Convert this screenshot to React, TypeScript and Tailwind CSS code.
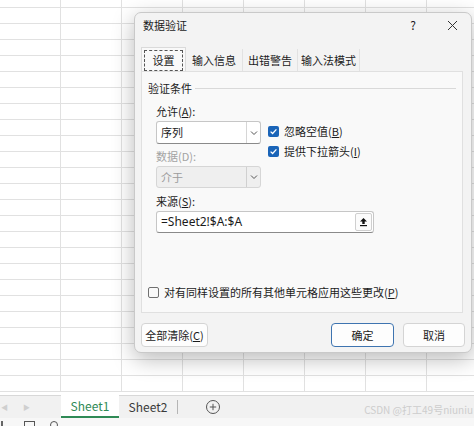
import React from "react";

const cjk = { fontFamily: '"Noto Sans CJK SC", "Noto Sans", sans-serif' };

const ROWS = 24;
const COLS = 8;

function Grid() {
  return (
    <div className="flex flex-col h-[395px] overflow-hidden">
      <div className="h-[8px] shrink-0 border-b border-[#e1e1e1] flex">
        {Array.from({ length: COLS }).map((_, c) => (
          <div key={c} className="w-[61px] shrink-0 border-r border-[#e1e1e1]" />
        ))}
      </div>
      {Array.from({ length: ROWS }).map((_, r) => (
        <div key={r} className="h-[16px] shrink-0 border-b border-[#e1e1e1] flex">
          {Array.from({ length: COLS }).map((_, c) => (
            <div key={c} className="w-[61px] shrink-0 border-r border-[#e1e1e1]" />
          ))}
        </div>
      ))}
    </div>
  );
}

function Chevron() {
  return (
    <svg width="10" height="10" viewBox="0 0 10 10" fill="none">
      <path d="M2 3.5 L5 6.5 L8 3.5" stroke="#555" strokeWidth="1" />
    </svg>
  );
}

function Select({ value, disabled }: { value: string; disabled?: boolean }) {
  return (
    <div
      className={`flex items-stretch w-[105px] border rounded-[3px] ${
        disabled ? "h-[22px] bg-[#efefef] border-[#d6d6d6] text-[#9b9b9b]" : "h-[23px] bg-white border-[#c6c6c6] border-b-[#8a8a8a] text-[#1b1b1b]"
      }`}
    >
      <div className="flex-1 flex items-center pl-[4px]">{value}</div>
      <div className={`w-[14px] flex items-center justify-center border-l ${disabled ? "border-[#d0d0d0]" : "border-[#d6d6d6]"}`}>
        <Chevron />
      </div>
    </div>
  );
}

function Check({ checked, children }: { checked?: boolean; children: React.ReactNode }) {
  return (
    <div className="flex items-center h-[20px] gap-[5px]">
      {checked ? (
        <div className="w-[11px] h-[11px] rounded-[2px] bg-[#1a64b8] flex items-center justify-center">
          <svg width="9" height="9" viewBox="0 0 9 9" fill="none">
            <path d="M1.6 4.6 L3.6 6.5 L7.4 2.4" stroke="white" strokeWidth="1.3" />
          </svg>
        </div>
      ) : (
        <div className="w-[11px] h-[11px] rounded-[2px] border border-[#707070] bg-[#f9f9f9]" />
      )}
      <span>{children}</span>
    </div>
  );
}

function Dialog() {
  return (
    <div
      className="absolute left-[134px] top-[12px] w-[338px] h-[341px] rounded-[7px] bg-[#f3f3f3] border border-[#c9c9c9] shadow-[0_6px_22px_rgba(0,0,0,0.28)] flex flex-col px-[6px] text-[11px] text-[#1b1b1b]"
      style={cjk}
    >
      {/* title bar */}
      <div className="h-[24px] flex items-center shrink-0">
        <span className="pl-[2px]">数据验证</span>
        <span className="ml-auto w-[10px] text-center text-[12px] mr-[29px]">?</span>
        <svg width="11" height="11" viewBox="0 0 11 11" className="mr-[7px]">
          <path d="M1 1 L10 10 M10 1 L1 10" stroke="#333" strokeWidth="1" />
        </svg>
      </div>

      {/* tabs */}
      <div className="mt-[10px] h-[24px] flex items-end shrink-0">
        <div className="w-[45px] h-[24px] bg-[#f9f9f9] border border-b-0 border-[#dadada] flex items-center justify-center px-[2px] pt-[2px]">
          <div className="w-full h-full border border-dashed border-[#555] flex items-center justify-center">设置</div>
        </div>
        <div className="w-[57px] h-[22px] bg-[#f3f3f3] border-r border-[#e2e2e2] flex items-center justify-center">输入信息</div>
        <div className="w-[55px] h-[22px] bg-[#f3f3f3] border-r border-[#e2e2e2] flex items-center justify-center">出错警告</div>
        <div className="w-[62px] h-[22px] bg-[#f3f3f3] border-r border-[#e2e2e2] flex items-center justify-center">输入法模式</div>
      </div>

      {/* settings panel */}
      <div className="h-[242px] mr-[2px] bg-[#f9f9f9] border border-[#e0e0e0] flex flex-col pt-[9px] px-[6px] pb-[10px]">
        <div className="flex items-center h-[14px]">
          <span>验证条件</span>
          <div className="flex-1 h-px bg-[#d9d9d9] ml-[3px]" />
        </div>
        <div className="flex pl-[8px] mt-[8px]">
          <div className="flex flex-col">
            <div className="h-[16px] flex items-center">
              允许(<span className="underline">A</span>):
            </div>
            <div className="mt-[2px]">
              <Select value="序列" />
            </div>
            <div className="h-[16px] mt-[4px] flex items-center text-[#a3a3a3]">数据(D):</div>
            <div className="mt-[2px]">
              <Select value="介于" disabled />
            </div>
          </div>
          <div className="flex flex-col ml-[7px] mt-[18px]">
            <Check checked>
              忽略空值(<span className="underline">B</span>)
            </Check>
            <Check checked>
              提供下拉箭头(<span className="underline">I</span>)
            </Check>
          </div>
        </div>
        <div className="pl-[8px] mt-[5px] h-[16px] flex items-center">
          来源(<span className="underline">S</span>):
        </div>
        <div className="ml-[8px] mt-[2px] w-[218px] h-[22px] bg-white border border-[#c6c6c6] border-b-[#8a8a8a] rounded-[3px] flex items-center pl-[4px] pr-[1px]">
          <span className="flex-1 text-[12px]" style={{ fontFamily: '"Noto Sans", "Noto Sans CJK SC", sans-serif' }}>
            =Sheet2!$A:$A
          </span>
          <div className="w-[17px] h-[18px] border border-[#cfcfcf] rounded-[2px] bg-[#fbfbfb] flex items-center justify-center">
            <svg width="9" height="10" viewBox="0 0 9 10">
              <path d="M4.5 1 L8 4.5 H5.7 V7 H3.3 V4.5 H1 Z" fill="#111" />
              <rect x="1" y="8" width="7" height="1.2" fill="#111" />
            </svg>
          </div>
        </div>
        <div className="mt-auto">
          <Check>
            对有同样设置的所有其他单元格应用这些更改(<span className="underline">P</span>)
          </Check>
        </div>
      </div>

      {/* buttons */}
      <div className="mt-[10px] flex items-center h-[24px]">
        <div className="w-[67px] h-[24px] bg-[#fdfdfd] border border-[#d4d4d4] rounded-[4px] flex items-center justify-center">
          全部清除(<span className="underline">C</span>)
        </div>
        <div className="ml-auto w-[63px] h-[24px] bg-[#fdfdfd] border border-[#3e74b0] rounded-[4px] flex items-center justify-center">
          确定
        </div>
        <div className="ml-[9px] w-[62px] h-[24px] bg-[#fdfdfd] border border-[#d4d4d4] rounded-[4px] flex items-center justify-center">
          取消
        </div>
      </div>
    </div>
  );
}

export default function App() {
  return (
    <div className="relative w-[474px] h-[426px] overflow-hidden bg-white" style={cjk}>
      <Grid />

      {/* sheet tab bar */}
      <div className="h-[23px] bg-[#f1f1f1] border-t border-[#d8d8d8] flex items-stretch text-[12px]">
        <div className="w-[61px] flex items-center text-[#cfcfcf] text-[7px] pl-[1px] gap-[15px]">
          <span>◀</span>
          <span>▶</span>
        </div>
        <div className="w-[58px] bg-white border-b-2 border-[#2f8a56] text-[#2f8a56] flex items-center justify-center -mt-px">
          Sheet1
        </div>
        <div className="w-[58px] flex items-center justify-center text-[#3a3a3a]">Sheet2</div>
        <div className="w-px my-[4px] bg-[#b5b5b5]" />
        <div className="ml-[27px] flex items-center">
          <svg width="16" height="16" viewBox="0 0 16 16" fill="none">
            <circle cx="8" cy="8" r="6.5" stroke="#555" strokeWidth="1" />
            <path d="M8 4.8 V11.2 M4.8 8 H11.2" stroke="#555" strokeWidth="1" />
          </svg>
        </div>
        <div className="ml-auto self-end pr-[1px] pb-[1px] text-[10px] text-[#cdcdcd]">CSDN @打工49号niuniu</div>
      </div>

      {/* status bar, only its top edge shows */}
      <div className="h-[20px] bg-[#f7f7f7] flex items-start pt-[3px]">
        <div className="ml-[1px] w-[2px] h-[8px] bg-[#666]" />
        <div className="ml-[21px] w-[11px] h-[9px] border border-[#555]" />
        <div className="ml-[15px] w-[8px] h-[8px] rounded-full border border-[#555]" />
      </div>

      <Dialog />
    </div>
  );
}
